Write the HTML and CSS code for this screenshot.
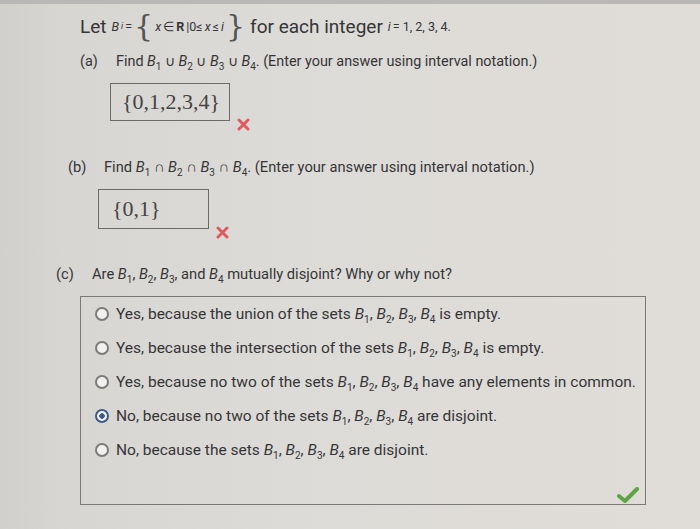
FILE: index.html
```html
<!DOCTYPE html>
<html>
<head>
<meta charset="utf-8">
<link rel="stylesheet" href="styles.css">
</head>
<body>
<div class="topbar"></div>
<div class="page">
  <div class="intro">
    <span>Let</span>
    <span class="m"><i>B</i><sub><i>i</i></sub> = <span class="brace">{</span><i>x</i>∈<b>R</b>|0≤<i>x</i>≤<i>i</i><span class="brace">}</span></span>
    <span>for each integer</span>
    <span class="m"><i>i</i> = 1, 2, 3, 4.</span>
  </div>

  <div class="part part-a">
    <div class="q"><span class="lbl">(a)</span><span>Find <i>B</i><sub>1</sub> ∪ <i>B</i><sub>2</sub> ∪ <i>B</i><sub>3</sub> ∪ <i>B</i><sub>4</sub>. (Enter your answer using interval notation.)</span></div>
    <div class="ans-row ans-a">
      <div class="ansbox box-a">{0,1,2,3,4}</div>
      <svg class="xmark" width="13" height="13" viewBox="0 0 13 13"><path d="M2 2 L11 11 M11 2 L2 11" stroke="#e05a5e" stroke-width="3" stroke-linecap="round"/></svg>
    </div>
  </div>

  <div class="part part-b">
    <div class="q"><span class="lbl">(b)</span><span>Find <i>B</i><sub>1</sub> ∩ <i>B</i><sub>2</sub> ∩ <i>B</i><sub>3</sub> ∩ <i>B</i><sub>4</sub>. (Enter your answer using interval notation.)</span></div>
    <div class="ans-row ans-b">
      <div class="ansbox box-b">{0,1}</div>
      <svg class="xmark" width="13" height="13" viewBox="0 0 13 13"><path d="M2 2 L11 11 M11 2 L2 11" stroke="#e05a5e" stroke-width="3" stroke-linecap="round"/></svg>
    </div>
  </div>

  <div class="part part-c">
    <div class="q"><span class="lbl">(c)</span><span>Are <i>B</i><sub>1</sub>, <i>B</i><sub>2</sub>, <i>B</i><sub>3</sub>, and <i>B</i><sub>4</sub> mutually disjoint? Why or why not?</span></div>
    <div class="options">
      <div class="opt"><span class="radio"></span><span>Yes, because the union of the sets <i>B</i><sub>1</sub>, <i>B</i><sub>2</sub>, <i>B</i><sub>3</sub>, <i>B</i><sub>4</sub> is empty.</span></div>
      <div class="opt"><span class="radio"></span><span>Yes, because the intersection of the sets <i>B</i><sub>1</sub>, <i>B</i><sub>2</sub>, <i>B</i><sub>3</sub>, <i>B</i><sub>4</sub> is empty.</span></div>
      <div class="opt"><span class="radio"></span><span>Yes, because no two of the sets <i>B</i><sub>1</sub>, <i>B</i><sub>2</sub>, <i>B</i><sub>3</sub>, <i>B</i><sub>4</sub> have any elements in common.</span></div>
      <div class="opt"><span class="radio on"></span><span>No, because no two of the sets <i>B</i><sub>1</sub>, <i>B</i><sub>2</sub>, <i>B</i><sub>3</sub>, <i>B</i><sub>4</sub> are disjoint.</span></div>
      <div class="opt"><span class="radio"></span><span>No, because the sets <i>B</i><sub>1</sub>, <i>B</i><sub>2</sub>, <i>B</i><sub>3</sub>, <i>B</i><sub>4</sub> are disjoint.</span></div>
      <div class="check-row">
        <svg width="22" height="16" viewBox="0 0 22 16"><path d="M2 9 L8 14 L20 2" fill="none" stroke="#5fa348" stroke-width="4" stroke-linecap="round" stroke-linejoin="round"/></svg>
      </div>
    </div>
  </div>
</div>
</body>
</html>
```

FILE: styles.css
```css
html, body {
  margin: 0;
  padding: 0;
}
body {
  width: 700px;
  height: 529px;
  overflow: hidden;
  background: linear-gradient(90deg, #d2d0cc 0px, #d8d6d2 70px, #dddbd7 300px, #e0ddd9 700px);
  font-family: Roboto, "Liberation Sans", Arial, sans-serif;
  color: #353537;
}
.topbar {
  height: 4px;
  background: #b9b8b6;
}
.page {
  display: flex;
  flex-direction: column;
}
.intro {
  display: flex;
  align-items: center;
  gap: 5px;
  padding-left: 80px;
  margin-top: 8px;
  height: 28px;
  font-size: 19px;
}
.intro .m {
  font-size: 12.5px;
  display: inline-flex;
  align-items: center;
  gap: 2px;
}
.intro .m sub {
  font-size: 9px;
}
.brace {
  font-family: "DejaVu Serif", "Liberation Serif", serif;
  font-size: 30px;
  font-weight: 300;
  line-height: 1;
  color: #555;
}
i {
  font-style: italic;
}
sub {
  font-size: 10px;
  vertical-align: -4px;
  line-height: 0;
}
.q {
  display: flex;
  font-size: 14.4px;
  height: 20px;
  align-items: center;
}
.part-b .q,
.part-c .q {
  font-size: 14.7px;
}
.lbl {
  width: 36px;
}
.part-a {
  padding-left: 80px;
  margin-top: 11px;
}
.ans-row {
  display: flex;
  align-items: flex-end;
}
.ansbox {
  border: 1px solid #6c6b69;
  font-family: "Liberation Serif", serif;
  font-size: 22px;
  color: #444;
  display: flex;
  align-items: center;
  box-sizing: border-box;
}
.ans-a {
  margin-top: 12px;
  padding-left: 30px;
}
.box-a {
  width: 120px;
  height: 38px;
  padding-left: 11px;
}
.xmark {
  margin-left: 7px;
  margin-bottom: -10px;
}
.part-b {
  padding-left: 68px;
  margin-top: 36px;
}
.ans-b {
  margin-top: 12px;
  padding-left: 30px;
}
.box-b {
  width: 111px;
  height: 40px;
  padding-left: 13px;
}
.part-c {
  padding-left: 56px;
  margin-top: 35px;
}
.options {
  margin-left: 24px;
  margin-top: 12px;
  width: 566px;
  height: 209px;
  box-sizing: border-box;
  border: 1px solid #7a7977;
  padding: 0 0 0 14px;
  display: flex;
  flex-direction: column;
}
.opt {
  display: flex;
  align-items: center;
  gap: 7px;
  height: 34px;
  font-size: 15.5px;
}
.radio {
  width: 10px;
  height: 10px;
  border: 2px solid #7b7b7b;
  border-radius: 50%;
  background: #f2f1ef;
  flex: none;
}
.radio.on {
  border: 2px solid #3c5c86;
  background: radial-gradient(circle, #3c5c86 0 2.5px, #f2f1ef 3px);
}
.check-row {
  display: flex;
  justify-content: flex-end;
  padding-right: 6px;
  margin-top: 20px;
}
```
